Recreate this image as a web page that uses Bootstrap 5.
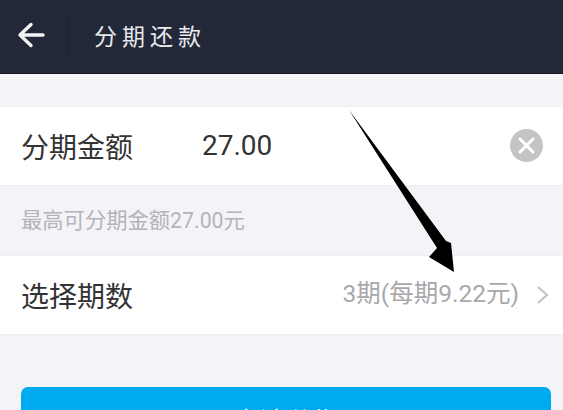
<!DOCTYPE html>
<html lang="zh"><head><meta charset="utf-8">
<title>分期还款</title>
<link rel="stylesheet" href="https://cdn.jsdelivr.net/npm/bootstrap@5.3.0/dist/css/bootstrap.min.css">
<style>
html,body{height:410px;overflow:hidden}
body{background:#f3f3f8;font-family:"Roboto","Noto Sans CJK SC",sans-serif;position:relative}
.top-bar{height:74px;padding-bottom:3px;background:#222838;border-bottom:1px solid #14171f}
.back-cell{width:69px;height:40px;border-right:1px solid #1b202e;padding-right:6px}
.bar-title{color:#e8e9ec;font-size:23px;letter-spacing:5px;margin-left:25px;font-weight:400;font-family:"Noto Sans CJK SC",sans-serif}
.form-row{height:80px;background:#fff;padding:0 13px 1px 21px;border-top:1px solid #eeeef3;border-bottom:1px solid #eeeef3;color:#333}
.row-label{font-size:28px;width:181px;font-family:"Noto Sans CJK SC",sans-serif}
.row-value{font-size:28px;color:#333}
.clear-dot{width:33px;height:33px;border-radius:50%;background:#c4c4c6;margin-right:7px}
.note-row{height:69px;padding-left:21px;color:#b3b3b8;font-size:21.300px}
.period-text{color:#a8a8ac;font-size:24.500px;margin-right:17px}
.submit-btn{position:relative;margin:52px 12px 0 21px;height:60px;width:530px;background:#00aaef;border:0;border-radius:7px;color:#fff;font-size:28px;padding-top:15px;line-height:36px}
.pointer-arrow{position:absolute;left:340px;top:105px;pointer-events:none}
</style></head><body>
<div class="top-bar d-flex align-items-center">
<div class="back-cell d-flex align-items-center justify-content-center">
<svg width="30" height="28" viewBox="0 0 30 28"><path d="M27 14H5M15 3.500 4 14l11 10.500" fill="none" stroke="#f4f4f6" stroke-width="3.400" stroke-linecap="round" stroke-linejoin="round"/></svg>
</div>
<div class="bar-title">分期还款</div>
</div>
<div style="height:32px"></div>
<div class="form-row d-flex align-items-center">
<div class="row-label">分期金额</div>
<div class="row-value flex-grow-1">27.00</div>
<div class="clear-dot d-flex align-items-center justify-content-center">
<svg width="19" height="19" viewBox="0 0 19 19"><path d="M3 3l13 13M16 3 3 16" stroke="#fff" stroke-width="3" stroke-linecap="round"/></svg>
</div>
</div>
<div class="note-row d-flex align-items-center">最高可分期金额27.00元</div>
<div class="form-row d-flex align-items-center">
<div class="row-label flex-grow-1">选择期数</div>
<div class="period-text">3期(每期9.22元)</div>
<svg width="14" height="20" viewBox="0 0 14 20"><path d="M2 2l9 8-9 8" fill="none" stroke="#c4c4c8" stroke-width="2.200"/></svg>
</div>
<button class="submit-btn d-block text-center">确认分期</button>
<svg class="pointer-arrow" width="125" height="180" viewBox="0 0 125 180"><path d="M9 5 97 143 89 152 114 167 111 138 106 136Z" fill="#000"/></svg>
</body></html>
